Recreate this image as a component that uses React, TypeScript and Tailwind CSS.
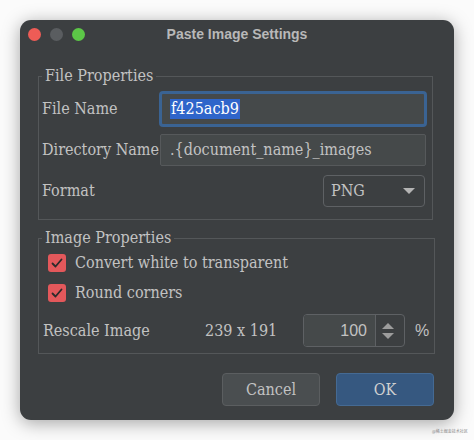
import React from "react";

const serif = { fontFamily: '"DejaVu Serif Condensed", "DejaVu Serif", serif' };

const Check = () => (
  <span className="flex h-[18px] w-[18px] items-center justify-center rounded-[3px] bg-[#e3585b]">
    <svg width="18" height="18" viewBox="0 0 18 18">
      <polyline
        points="4.5,9.5 7.5,12.5 13.5,5.5"
        fill="none"
        stroke="#2b2b2b"
        strokeWidth="1.8"
        strokeLinecap="round"
        strokeLinejoin="round"
      />
    </svg>
  </span>
);

const App: React.FC = () => {
  return (
    <div className="min-h-screen bg-[#fbfbfb] pt-[20px] pl-[20px]">
      {/* Dialog window */}
      <div
        className="flex h-[400px] w-[434px] flex-col rounded-[11px] bg-[#3c3f41] text-[16px] font-stretch-condensed whitespace-nowrap text-[#c2c2c2] shadow-[0_3px_18px_rgba(0,0,0,0.35)]"
        style={serif}
      >
        {/* Title bar */}
        <div className="grid h-[28px] grid-cols-[1fr_auto_1fr] items-center">
          <div className="flex items-center gap-[9px] pl-[8px]">
            <span className="h-[13px] w-[13px] rounded-full bg-[#ee5c56]" />
            <span className="h-[13px] w-[13px] rounded-full bg-[#5a5d60]" />
            <span className="h-[13px] w-[13px] rounded-full bg-[#5cc747]" />
          </div>
          <span className="pt-[1px] font-['Liberation_Sans',sans-serif] text-[14px] font-bold font-stretch-normal text-[#b8b8b8]">
            Paste Image Settings
          </span>
          <div />
        </div>

        <div className="flex flex-col pl-[18px]">
          {/* File Properties */}
          <fieldset className="mt-[17px] w-[395px] border border-[#545759] pr-[5px] pl-[3px] pb-[12px]">
            <legend className="px-[3px] leading-[22px]">File Properties</legend>
            <div className="flex flex-col pt-[4px]">
              <div className="flex h-[36px] items-center">
                <label className="w-[117px]">File Name</label>
                <div className="flex h-[36px] w-[268px] items-center rounded-[4px] border-[3px] border-[#3a6393] bg-[#45494a] pl-[8px]">
                  <span className="bg-[#2f65ca] px-[1px] leading-[20px] text-white">f425acb9</span>
                </div>
              </div>
              <div className="mt-[7px] flex h-[32px] items-center">
                <label className="w-[118px]">Directory Name</label>
                <div className="flex h-[32px] w-[266px] items-center rounded-[2px] border border-[#56595b] bg-[#45494a] pl-[9px]">
                  .{"{"}document_name{"}"}_images
                </div>
              </div>
              <div className="mt-[9px] flex h-[32px] items-center justify-between">
                <label>Format</label>
                <div className="mr-[2px] flex h-[32px] w-[102px] items-center justify-between rounded-[4px] border border-[#5e6164] pr-[9px] pl-[7px]">
                  <span>PNG</span>
                  <svg width="12" height="7" viewBox="0 0 12 7">
                    <polygon points="0,0 12,0 6,6" fill="#b4b4b4" />
                  </svg>
                </div>
              </div>
            </div>
          </fieldset>

          {/* Image Properties */}
          <fieldset className="mt-[7px] w-[395px] border border-[#545759] pr-[5px] pl-[3px] pb-[6px]">
            <legend className="px-[3px] leading-[22px]">Image Properties</legend>
            <div className="flex flex-col pt-[2px]">
              <label className="flex h-[24px] items-center gap-[9px] pl-[6px]">
                <Check />
                Convert white to transparent
              </label>
              <label className="mt-[6px] flex h-[24px] items-center gap-[9px] pl-[6px]">
                <Check />
                Round corners
              </label>
              <div className="mt-[9px] flex h-[33px] items-center">
                <span className="w-[163px] pl-[1px]">Rescale Image</span>
                <span className="w-[98px]">239 x 191</span>
                <div className="flex h-[33px] w-[102px] overflow-hidden rounded-[4px] border border-[#5e6164]">
                  <div className="flex w-[71px] items-center justify-end bg-[#45494a] pr-[8px] font-['Liberation_Sans',sans-serif] text-[16px] font-stretch-normal">
                    100
                  </div>
                  <div className="flex flex-1 flex-col items-center justify-center gap-[4px] border-l border-[#5e6164] pr-[4px]">
                    <svg width="12" height="6" viewBox="0 0 12 6">
                      <polygon points="6,0 12,6 0,6" fill="#9c9c9c" />
                    </svg>
                    <svg width="12" height="6" viewBox="0 0 12 6">
                      <polygon points="0,0 12,0 6,6" fill="#9c9c9c" />
                    </svg>
                  </div>
                </div>
                <span className="ml-[10px] font-['Liberation_Sans',sans-serif] text-[16px] font-stretch-normal">%</span>
              </div>
            </div>
          </fieldset>

          {/* Buttons */}
          <div className="mt-[19px] flex justify-end gap-[16px] pr-[20px]">
            <button className="h-[33px] w-[98px] rounded-[4px] border border-[#5b5e60] bg-[#4a4e50] text-[#c2c2c2]">
              Cancel
            </button>
            <button className="h-[33px] w-[98px] rounded-[4px] border border-[#456a93] bg-[#365880] text-[#d0d0d0]">
              OK
            </button>
          </div>
        </div>
      </div>
      <div className="mt-[8px] ml-[412px] text-[4px] text-[#888]" style={{ fontFamily: '"Noto Sans CJK SC", sans-serif' }}>
        @稀土掘金技术社区
      </div>
    </div>
  );
};

export default App;
